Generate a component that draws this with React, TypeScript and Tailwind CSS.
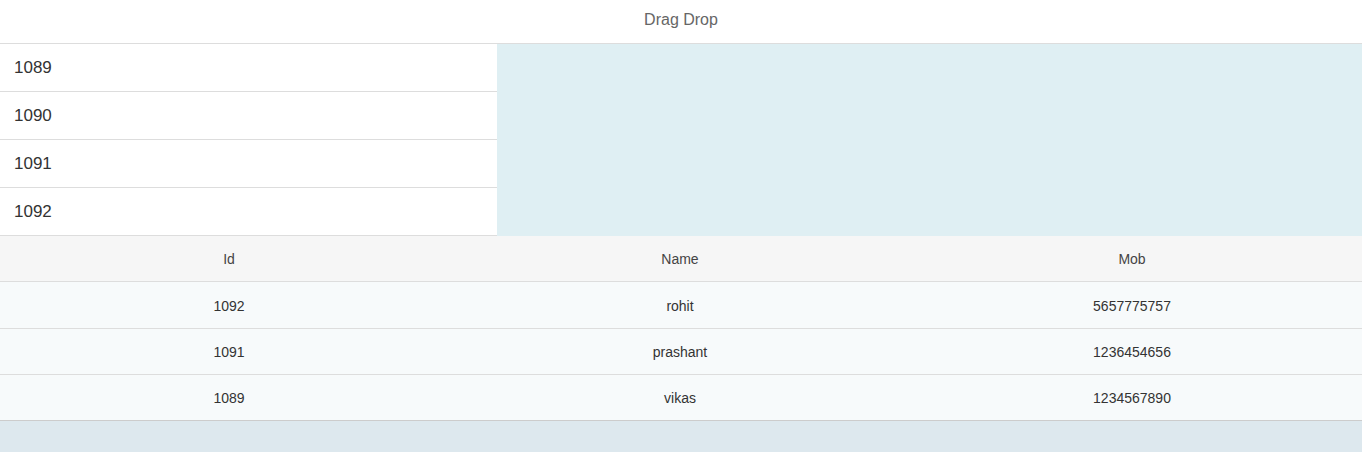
import React from "react";

const items = ["1089", "1090", "1091", "1092"];

const rows = [
  { id: "1092", name: "rohit", mob: "5657775757" },
  { id: "1091", name: "prashant", mob: "1236454656" },
  { id: "1089", name: "vikas", mob: "1234567890" },
];

export default function App() {
  return (
    <div className="min-h-[452px] bg-[#dde8ee] font-['Liberation_Sans',Arial,sans-serif] text-[#333]">
      <header className="h-[44px] bg-white border-b border-[#dddddd] flex items-center justify-center pb-[4px] text-[16px] text-[#666]">
        Drag Drop
      </header>

      <div className="flex">
        <ul className="w-[497px] bg-white">
          {items.map((it) => (
            <li key={it} className="h-[48px] border-b border-[#dddddd] flex items-center pl-[14px] text-[17px] text-[#333]">
              {it}
            </li>
          ))}
        </ul>
        <div className="flex-1 bg-[#dfeff3]" />
      </div>

      <div className="text-[14px]">
        <div className="grid grid-cols-[458px_444px_1fr] h-[46px] items-center pt-[2px] text-center bg-[#f6f6f6] border-b border-[#dddddd] text-[#444]">
          <div>Id</div>
          <div>Name</div>
          <div>Mob</div>
        </div>
        {rows.map((r, i) => (
          <div
            key={r.id}
            className={`grid grid-cols-[458px_444px_1fr] items-center pt-[2px] text-center bg-[#f7fafb] border-b ${
              i === 0 ? "h-[47px]" : "h-[46px]"
            } ${i === rows.length - 1 ? "border-[#cccccc]" : "border-[#dddddd]"}`}
          >
            <div>{r.id}</div>
            <div>{r.name}</div>
            <div>{r.mob}</div>
          </div>
        ))}
      </div>
    </div>
  );
}
